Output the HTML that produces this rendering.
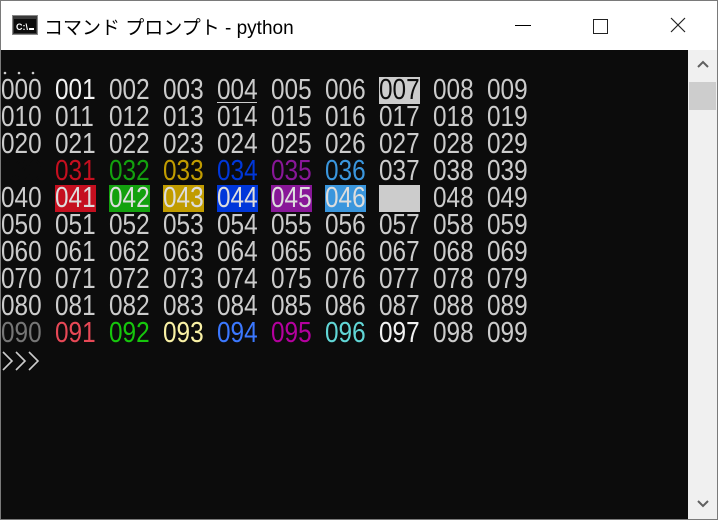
<!DOCTYPE html>
<html><head><meta charset="utf-8"><style>
body{margin:0;width:718px;height:520px;overflow:hidden;background:#fff;position:relative;font-family:"Liberation Sans","Noto Sans CJK JP",sans-serif}
#frame{position:absolute;left:0;top:0;width:716px;height:518px;border:1px solid #7a7a7a}
#title{position:absolute;left:44px;top:13px;font-size:19px;color:#000;font-family:"Liberation Sans","Noto Sans CJK JP",sans-serif}
#term{position:absolute;left:1px;top:50px;width:687px;height:469px;background:#0c0c0c;overflow:hidden}
#sb{position:absolute;left:688px;top:50px;width:29px;height:469px;background:#f0f0f0}
.c{position:absolute;height:27px;width:41px;line-height:27px;color:#ccc;font-size:29px;white-space:nowrap;overflow:visible}
.c span{display:inline-block;transform:scaleX(0.84);transform-origin:0 0}
</style></head><body>
<div id="frame"></div>
<svg style="position:absolute;left:12px;top:15px" width="26" height="20" viewBox="0 0 26 20"><rect x="0.5" y="0.5" width="25" height="19" fill="#3a3a3a" stroke="#888"/><rect x="2" y="4" width="22" height="14" fill="#0c0c0c"/><text x="4" y="15" font-size="9" fill="#fff" font-family="Liberation Sans" font-weight="bold">C:\</text><rect x="17" y="13" width="5" height="2" fill="#fff"/></svg>
<div id="title">コマンド プロンプト - python</div>
<div style="position:absolute;left:515px;top:25px;width:16px;height:1px;background:#000"></div>
<div style="position:absolute;left:593px;top:19px;width:13px;height:13px;border:1px solid #222"></div>
<svg style="position:absolute;left:670px;top:17px" width="16" height="16"><path d="M1 1L15 15M15 1L1 15" stroke="#222" stroke-width="1.2"/></svg>
<div id="term"></div>
<div id="sb"><svg style="position:absolute;left:9px;top:10px" width="12" height="8"><path d="M1 7L6 2L11 7" stroke="#606060" stroke-width="2" fill="none"/></svg><div style="position:absolute;left:1px;top:32px;width:27px;height:28px;background:#cdcdcd"></div><svg style="position:absolute;left:9px;top:450px" width="12" height="8"><path d="M1 1L6 6L11 1" stroke="#606060" stroke-width="2" fill="none"/></svg></div>
<div id="cells"></div>
<svg style="position:absolute;left:2px;top:60px" width="40" height="16"><circle cx="3" cy="13" r="1.3" fill="#ccc"/><circle cx="17" cy="13" r="1.3" fill="#ccc"/><circle cx="31" cy="13" r="1.3" fill="#ccc"/></svg>
<svg style="position:absolute;left:2px;top:350px" width="42" height="22"><path d="M1 2L10 11L1 20M14 2L23 11L14 20M27 2L36 11L27 20" stroke="#ccc" stroke-width="1.6" fill="none"/></svg>
<script>
var fg={31:'#c50f1f',32:'#13a10e',33:'#c19c00',34:'#0037da',35:'#881798',36:'#3a96dd',90:'#767676',91:'#e74856',92:'#16c60c',93:'#f9f1a5',94:'#3b78ff',95:'#b4009e',96:'#61d6d6',97:'#f2f2f2',1:'#f2f2f2',30:'#0c0c0c'};
var bg={41:'#c50f1f',42:'#13a10e',43:'#c19c00',44:'#0037da',45:'#881798',46:'#3a96dd',47:'#cccccc',7:'#cccccc'};
var h='';
for(var n=0;n<100;n++){var r=Math.floor(n/10),c=n%10;var s=('00'+n).slice(-3);
var st='left:'+(1+c*54)+'px;top:'+(77+r*27)+'px;';
if(fg[n])st+='color:'+fg[n]+';';
if(bg[n])st+='background:'+bg[n]+';';
if(n>=41&&n<=46)st+='color:#ddd;';
if(n==7)st+='color:#0c0c0c;';
if(n==47)st+='color:#cccccc;';
var inner='<span>'+s+'</span>';
if(n==4)inner+='<div style="position:absolute;left:0;top:25px;width:40px;height:1px;background:#ccc"></div>';
h+='<div class="c" style="'+st+'">'+inner+'</div>';}
document.getElementById('cells').innerHTML=h;
</script>
</body></html>
